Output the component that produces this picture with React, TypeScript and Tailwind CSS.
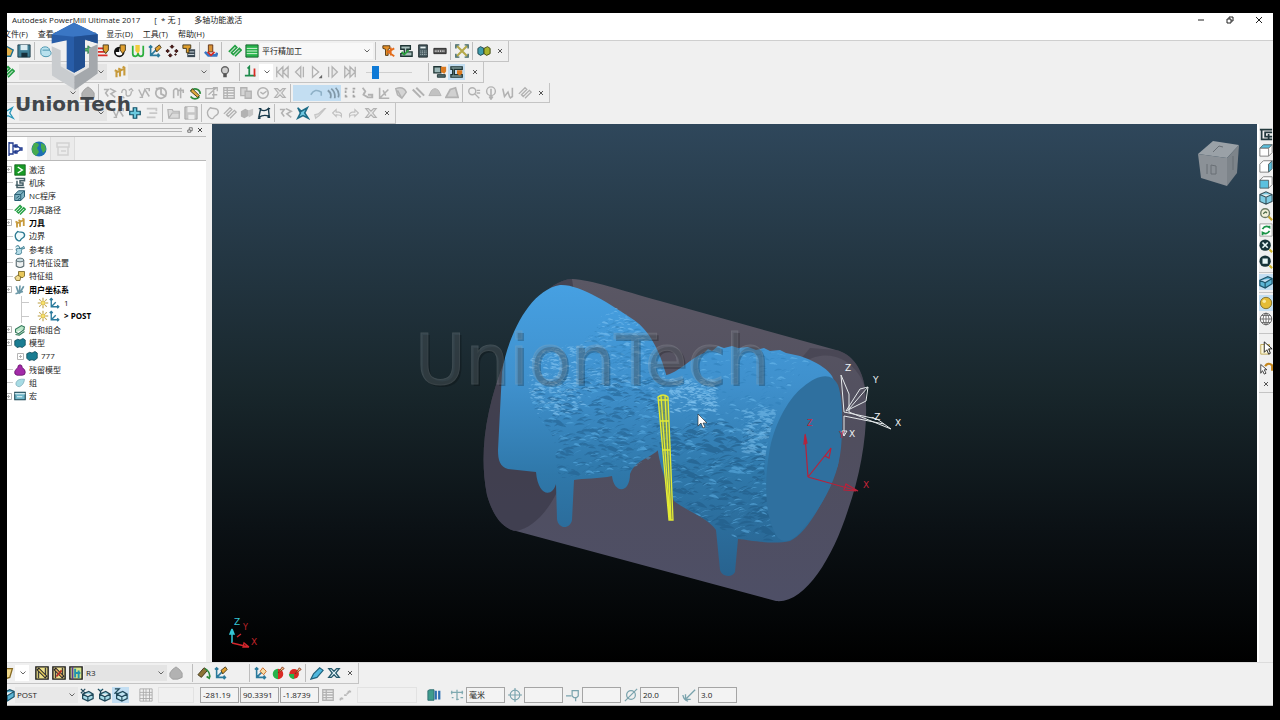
import type { ReactNode } from "react";

const G = "#b2b2b2";

const tool = <path d="M7 1h6v6l-3 4-3-4z" fill="#e0a030" stroke="#3b3115" />;
const axes = <path d="M3 2v11h10M3 13l6-6M1 4l2-2 2 2M11 11l2 2-2 2" fill="none" stroke="#2a7a9c" strokeWidth="1.8" />;

const icons: { [key: string]: ReactNode } = {
    open: <path d="M1 6l6-3 7 4-3 7H1z" fill="#e3b04b" stroke="#1d6f92" strokeWidth="1.5" />,
    save: <><path d="M1 1h14v14H1z" fill="#3f7f96" stroke="#1c3a48" /><path d="M4 1h8v6H4z" fill="#dcecf2" /><path d="M5 10h7v5H5z" fill="#17303c" /></>,
    block: <><path d="M2 7c0-5 10-5 10 0l2 3c0 6-12 6-12 0z" fill="#b8e1ee" stroke="#3f8ba7" /><path d="M4 7h8" stroke="#3f8ba7" /></>,
    rapid: <path d="M1 5h8V2l5 4-5 5V8H1z" fill="#52b36a" stroke="#2f7350" />,
    feeds: <><path d="M1 5h9M1 9h9M1 13h11" stroke="#d92c25" strokeWidth="2" />{tool}</>,
    leads: <><circle cx="6" cy="9" r="5" fill="#fff" stroke="#111" strokeWidth="2" /><path d="M6 9V4a5 5 0 0 0-5 5z" fill="#111" />{tool}</>,
    holder: <><path d="M2 2v9q0 3 3 3t3-4q0 4 3 4t3-3V2" fill="none" stroke="#2cae3e" strokeWidth="2" /><path d="M5 1h5v7l-2 3-3-3z" fill="#f0cc3c" /></>,
    startpt: <>{axes}<path d="M8 5l5-4 2 3-5 5z" fill="#e0a030" stroke="#3b3115" /></>,
    points: <path d="M8 1l2 2-2 2-2-2zM3 6l2 2-2 2-2-2zM13 6l2 2-2 2-2-2zM6 11l2 2-2 2-2-2zM12 11l1 1-1 1-1-1z" fill="#521b18" stroke="#2a0d0b" />,
    sheet: <><path d="M6 6h9v9H6z" fill="#3c4a55" /><path d="M7 9h7M7 12h7" stroke="#dbe6ea" /><path d="M1 1h9v4H8v5H5V5H1z" fill="#e0a030" stroke="#3b3115" /></>,
    collision: <><path d="M1 9l4 4h9l1-3" fill="none" stroke="#3877c4" strokeWidth="3" /><path d="M5 1h5v8H5z" fill="#d89236" stroke="#5a2c10" /><path d="M4 9l4 4 4-4" stroke="#d92c25" strokeWidth="2" fill="none" /></>,
    path: <path d="M1 9l7-7 2 2-6 6 2 2 7-7 2 2-7 7" fill="none" stroke="#24a044" strokeWidth="2" />,
    raster: <><path d="M1 1h14v14H1z" fill="#27b34b" stroke="#155c2a" /><path d="M2 5h12M2 8h12M2 11h12" stroke="#eafbe9" /></>,
    verify: <><path d="M1 2h8v3L7 6v7H4V6L1 5z" fill="#e38f28" stroke="#49300d" /><path d="M14 5L7 9l7 5M10 4v9" stroke="#e36b1a" strokeWidth="2" fill="none" /></>,
    machine: <><path d="M2 2h11v4H9v3h6v5H2v-3h4V6H2z" fill="#a9c1bd" stroke="#1e3434" strokeWidth="1.5" /><path d="M3 9l3 3 5-5" stroke="#28a13b" strokeWidth="2" fill="none" /></>,
    calc: <><path d="M3 1h10v14H3z" fill="#46595f" stroke="#1c2529" /><path d="M5 3h6v2H5z" fill="#e7f1f1" /><path d="M5 8h7M5 10h7M5 12h7" stroke="#c1cfd0" strokeDasharray="1 1" /></>,
    ruler: <><path d="M1 5h14v6H1z" fill="#555" stroke="#222" /><path d="M2 8h12" stroke="#ddd" strokeWidth="2" strokeDasharray="1 1" /></>,
    fit: <><path d="M2 2l12 12M14 2L2 14" stroke="#b5a94a" strokeWidth="2.4" /><path d="M1 5V1h4M11 1h4v4M15 11v4h-4M5 15H1v-4" fill="none" stroke="#3c6464" strokeWidth="1.6" /></>,
    cubes: <><path d="M1 5l3-2 4 2v6l-4 2-3-2z" fill="#3e9cad" stroke="#163c45" /><path d="M8 5l4-2 3 2v6l-4 2-3-2z" fill="#a8b32d" stroke="#37400c" /></>,
    tools: <path d="M2 6l2 1v7M6 4l2 1v8M11 2l2 1v9M3 9l10-5" fill="none" stroke="#c79a3b" strokeWidth="2.4" />,
    bulb: <><circle cx="8" cy="6" r="4" fill="#cfcfcf" stroke="#666" strokeWidth="1.5" /><path d="M6 10h4v4H6z" fill="#555" /></>,
    simul: <><path d="M4 4l2-2v9M1 12h12" stroke="#1e8b4c" strokeWidth="2" fill="none" /><path d="M11 4h2v9h-2z" fill="#d92c25" /></>,
    first: <path d="M2 2v12M9 2v12L3 8zM15 2v12L9 8z" fill="#e9e9e9" stroke={G} strokeWidth="1.5" />,
    back: <path d="M13 2v12M10 2v12L4 8z" fill="#e9e9e9" stroke={G} strokeWidth="1.5" />,
    play: <><path d="M4 2l7 6-7 6z" fill="#f4f4f4" stroke={G} strokeWidth="1.5" /><path d="M15 11v4h-4z" fill="#666" /></>,
    step: <path d="M3 2v12M7 2v12l6-6z" fill="#e9e9e9" stroke={G} strokeWidth="1.5" />,
    last: <path d="M2 2v12l6-6zM8 2v12l6-6zM14 2v12" fill="#e9e9e9" stroke={G} strokeWidth="1.5" />,
    simA: <><path d="M1 2h8v7H1z" fill="#9cb7b7" stroke="#1e3434" strokeWidth="1.5" /><path d="M5 11h9v3H5z" fill="#526a6e" stroke="#1e3434" /><path d="M9 2h6v5l-2 3-4-2z" fill="#dc7a20" /></>,
    simB: <><path d="M1 2h13v3H5v6h9v3H1v-3h2V5H1z" fill="#7b9696" stroke="#1e3434" strokeWidth="1.4" /><path d="M8 6h6v4l-3 2-3-2z" fill="#dc7a20" /></>,
    gcube: <path d="M4 4l4-3 4 3 3 4v5l-5 2H4l-3-3V8z" fill={G} stroke="#9c9c9c" />,
    g1: <path d="M1 4h5l-3 4 3 4M8 3l6 3-5 3 5 4" fill="none" stroke={G} strokeWidth="1.8" />,
    g2: <path d="M2 8c0-6 6-5 5 0s6 5 6-2M10 5l3-2 2 3M3 12l2 2" fill="none" stroke={G} strokeWidth="1.6" />,
    g3: <path d="M2 4l4 8 3-8 5 8M3 13h4M10 3h4v3" fill="none" stroke={G} strokeWidth="1.7" />,
    g4: <><circle cx="8" cy="8" r="6" fill="none" stroke={G} strokeWidth="2" /><path d="M2 3h6v6l6 3" fill="none" stroke={G} strokeWidth="2" /></>,
    g5: <path d="M3 14V5q3-4 5 0v6M11 2v12M8 5h6v3" fill="none" stroke={G} strokeWidth="1.8" />,
    recycle: <><path d="M3 6a6 6 0 0 1 11 3M13 12a6 6 0 0 1-10 0" fill="none" stroke="#2a8a3c" strokeWidth="2" /><path d="M5 3l8 8-2 2-8-7z" fill="#dfa93a" stroke="#3b3115" /></>,
    g6: <path d="M1 3h9v11H1zM4 10l9-8M9 2h5v4M8 10h6" fill="none" stroke={G} strokeWidth="1.5" />,
    list: <path d="M2 2h12v12H2zM2 5h12M2 8h12M2 11h12M6 2v12" fill="none" stroke={G} strokeWidth="1.5" />,
    copy: <><path d="M2 2h7v9H2z" fill="#d4d4d4" stroke={G} strokeWidth="1.5" /><path d="M7 6h7v8H7z" fill="#c9c9c9" stroke={G} strokeWidth="1.5" /></>,
    clock: <><circle cx="8" cy="8" r="6" fill="none" stroke={G} strokeWidth="1.8" /><path d="M5 7l3 2 4-3" fill="none" stroke={G} strokeWidth="1.5" /></>,
    del: <path d="M2 3l4 5-4 5h3l3-3 3 3h3l-4-5 4-5h-3L8 6 5 3z" fill="#e6e6e6" stroke={G} strokeWidth="1.3" />,
    arc: <path d="M2 10q5-8 12-3v4" fill="none" stroke="#8eb0c6" strokeWidth="1.8" />,
    waves: <path d="M2 5q5 3 3 9M6 3q5 4 4 11M11 2q5 5 3 11" fill="none" stroke="#8098a8" strokeWidth="2" />,
    dots: <path d="M2 3h3M11 3h3M2 12h3M11 12h3M3 5v6M12 5v6" stroke="#a5a5a5" strokeWidth="2" strokeDasharray="3 2" />,
    curve: <path d="M3 2l3 4-2 4 5 3h5v-3H9" fill="none" stroke={G} strokeWidth="2.2" />,
    gaxes: <path d="M3 2v12h11M3 14L13 4M7 5l3 6" fill="none" stroke={G} strokeWidth="1.8" />,
    fan: <path d="M2 3q9-3 12 4l-5 7-5-4zM4 5l5 9" fill="#d4d4d4" stroke={G} strokeWidth="1.6" />,
    lines: <path d="M2 4l9 9M6 2l9 9" stroke={G} strokeWidth="2.4" />,
    dome: <path d="M1 11l3-6q4-4 8 0l3 6z" fill="#c2c2c2" stroke={G} />,
    trap: <path d="M1 13l5-9 6-2 3 11z" fill="#d0d0d0" stroke={G} strokeWidth="2" />,
    search: <><circle cx="6" cy="6" r="4" fill="none" stroke={G} strokeWidth="1.6" /><path d="M9 9l5 5M11 5h4M11 8h4" stroke={G} strokeWidth="1.6" /></>,
    pin: <><circle cx="8" cy="6" r="5" fill="none" stroke={G} strokeWidth="1.6" /><path d="M8 3v12M6 12l2 3 2-3" stroke={G} strokeWidth="1.8" fill="none" /></>,
    ends: <path d="M2 3l2 9 4-5 2 6M13 2v10l-3 2" fill="none" stroke={G} strokeWidth="1.8" />,
    hatch: <path d="M1 9l7-7 2 2-6 6 2 2 7-7 2 2-7 7" fill="none" stroke={G} strokeWidth="1.6" />,
    star: <path d="M2 2l4 4 7-4-3 6 4 6-6-3-6 3 3-6z" fill="#dff4fa" stroke="#2795b8" strokeWidth="1.5" />,
    plus: <path d="M6 2h4v4h4v4h-4v4H6v-4H2V6h4z" fill="#6bc9de" stroke="#135268" strokeWidth="1.4" />,
    glist: <path d="M2 3h10M5 8h9M2 13h10M13 2v4" stroke="#c8c8c8" strokeWidth="2" />,
    gopen: <path d="M1 4h5l1 2h7v8H2zM2 14l4-6h9" fill="#dadada" stroke={G} strokeWidth="1.4" />,
    gsave: <><path d="M1 1h14v14H1z" fill="#c6c6c6" stroke="#a2a2a2" /><path d="M4 1h8v6H4zM5 10h7v5H5z" fill="#ececec" /></>,
    bound: <path d="M5 2c4 2 8-1 9 4s-4 4-5 7-6 1-7-3 0-5 3-8z" fill="none" stroke={G} strokeWidth="1.6" />,
    gblock: <><path d="M1 6l5-3 4 2v6l-5 3-4-2z" fill={G} /><path d="M9 5l6-2v7l-5 3z" fill="#c6c6c6" /></>,
    frame: <path d="M2 13L4 4q5 3 9-1l1 9Q8 9 2 13M1 14h3M12 13h3M2 3h3M12 3h3" fill="none" stroke="#17394a" strokeWidth="1.6" />,
    cstar: <path d="M2 2l4 4 7-4-3 6 4 6-6-3-6 3 3-6z" fill="#71c9e3" stroke="#1c6b86" strokeWidth="1.8" />,
    brush: <path d="M14 3L7 11l-4 3-1-4 4-1 7-6z" fill="#ddd" stroke="#c4c4c4" strokeWidth="1.3" />,
    undo: <path d="M3 8l4-4v3h3q4 1 3 5-1-2-6-2v2z" fill="none" stroke="#c0c0c0" strokeWidth="1.3" />,
    redo: <path d="M13 8L9 4v3H6q-4 1-3 5 1-2 6-2v2z" fill="none" stroke="#c0c0c0" strokeWidth="1.3" />,
    tree: <path d="M2 1v14M2 2h4v11H2M6 5h3M6 11h3M8 4h2v2H8zM13 7h2v2h-2zM8 10h2v2H8zM10 5l3 2M10 11l3-2" fill="none" stroke="#203a8f" strokeWidth="1.3" />,
    globe: <><circle cx="8" cy="8" r="7.5" fill="#1c6fb4" /><path d="M3 2q4-1 5 2L6 7l2 4-3 4q-5-3-4-8zM10 2l4 2 1 5-3 3-2-5z" fill="#46ab4e" /></>,
    recycler: <path d="M2 2h12v4H2zM3 6v8h10V6M6 10h5" fill="none" stroke="#d2d2d2" strokeWidth="1.5" />,
    active: <><path d="M1 1h14v14H1z" fill="#189a26" stroke="#0b5d15" /><path d="M5 4l6 4-6 4" fill="none" stroke="#fff" strokeWidth="2" /></>,
    mach: <path d="M2 2h12v3H8v3h4v3H2M4 5v9h10" fill="none" stroke="#456068" strokeWidth="2" />,
    nc: <path d="M1 6l5-5h8v8l-5 5H1zM1 6h8v8M9 6l5-5M3 11l4-3M5 13l3-2" fill="#7db1c0" stroke="#265c70" strokeWidth="1.3" />,
    bnd: <path d="M5 2c4 2 8-1 9 4s-4 4-5 7-6 1-7-3 0-5 3-8z" fill="#f0fbfd" stroke="#2c7a92" strokeWidth="1.8" />,
    pattern: <path d="M2 4q4-4 5 0t6-1l1 3q-5 0-4 4t-5 4l-3-1q3-3 1-5t3-2 5 0" fill="#b5dde8" stroke="#447f93" strokeWidth="1.3" />,
    hole: <><path d="M3 4v8q5 4 10 0V4" fill="#eef1f1" stroke="#5c6e74" strokeWidth="1.5" /><ellipse cx="8" cy="4" rx="5" ry="2.5" fill="#c7dbe0" stroke="#5c6e74" strokeWidth="1.3" /></>,
    feature: <><path d="M6 2h8v6l-2 2H6z" fill="#e9c85b" stroke="#6a5717" /><path d="M1 10l4-3 4 2-1 5H3z" fill="#f2dc92" stroke="#6a5717" /></>,
    wps: <path d="M3 3l3 9M8 2l-1 10M13 3L7 13M2 13l10-3" fill="none" stroke="#6a97a6" strokeWidth="2.2" />,
    sun: <><circle cx="8" cy="8" r="3" fill="#f8e26c" stroke="#c3a238" /><path d="M8 1v3M8 12v3M1 8h3M12 8h3M3 3l2 2M11 11l2 2M13 3l-2 2M3 13l2-2" stroke="#b99c3f" strokeWidth="1.4" /></>,
    axes,
    levels: <path d="M2 7l8-5 4 2-1 4-7 5-4-2zM2 11l4 2 8-6M2 14l5 1 7-5" fill="#b9e6c8" stroke="#35795c" strokeWidth="1.4" />,
    model: <path d="M1 5l4-2 3 1 4-2 3 2v7l-4 3-3-1-4 1-3-3z" fill="#1a7d92" stroke="#0c4653" />,
    stock: <path d="M5 5q0-4 3-4t3 4q4 2 4 6t-4 4H4q-4-1-3-5 1-3 4-5z" fill="#a32aa8" stroke="#5e1264" />,
    group: <path d="M3 7q2-5 11-4-1 8-7 10-6-1-4-6z" fill="#a7dbe4" stroke="#7cabb8" />,
    macro: <><path d="M1 3h14v10H1z" fill="#70b6c9" stroke="#17414f" strokeWidth="1.4" /><path d="M1 5h14M4 9h7" stroke="#ecf8fa" strokeWidth="1.6" /></>,
    vmach: <path d="M1 3h14M3 3v11h12M6 6h9M7 6v5h8M11 8v6" stroke="#23393d" strokeWidth="2" fill="none" />,
    vtop: <><path d="M1 6l4-4h10l-4 4z" fill="#5bc1df" stroke="#4c5a5e" /><path d="M1 6h10v9H1zM11 6l4-4v9l-4 4" fill="#fff" stroke="#777" /></>,
    vside: <><path d="M1 6l4-4h10l-4 4v9H1z" fill="#fff" stroke="#777" /><path d="M11 6l4-4v9l-4 4z" fill="#5bc1df" stroke="#4c5a5e" /></>,
    vfront: <><path d="M1 6l4-4h10v9l-4 4z" fill="#fff" stroke="#777" /><path d="M1 6h10v9H1z" fill="#5bc1df" stroke="#4c5a5e" /></>,
    viso: <path d="M1 4l7-3 7 3v8l-7 3-7-3zM1 4l7 3 7-3M8 7v8" fill="#7fcbe2" stroke="#35505a" strokeWidth="1.2" />,
    zoom: <><circle cx="7" cy="7" r="5" fill="#f3f1da" stroke="#6c7a63" strokeWidth="1.6" /><path d="M5 8q2-4 4-1" stroke="#4e6a49" fill="none" strokeWidth="1.5" /><path d="M11 11l4 4" stroke="#c8a52b" strokeWidth="2.5" /></>,
    refresh: <><path d="M1 1h14v14H1z" fill="#fff" stroke="#999" /><path d="M4 7q3-5 8-2V3M12 9q-3 5-8 2v3" fill="none" stroke="#1b9448" strokeWidth="2" /></>,
    zfit: <><circle cx="7" cy="7" r="6.5" fill="#173338" /><path d="M4 4l6 6M10 4l-6 6" stroke="#e8f6f6" strokeWidth="2" /><path d="M12 12l3 3" stroke="#d0b62b" strokeWidth="2.5" /></>,
    zbox: <><circle cx="7" cy="7" r="6.5" fill="#173338" /><path d="M4 4h6v6H4z" fill="#e8f6f6" /><path d="M12 12l3 3" stroke="#d0b62b" strokeWidth="2.5" /></>,
    vblock: <path d="M1 6l9-4 5 2v6l-8 5-6-3zM1 6l6 3 8-5M7 9v6" fill="#5cb5d6" stroke="#1c556c" strokeWidth="1.4" />,
    ball: <><circle cx="8" cy="8" r="6.5" fill="#e5bc35" stroke="#7d6a27" /><circle cx="6" cy="6" r="2" fill="#fae99c" /></>,
    wire: <><circle cx="8" cy="8" r="6.5" fill="#fff" stroke="#555" /><path d="M1 8h14M8 1v14M8 1q-7 7 0 14M8 1q7 7 0 14M3 4h10M3 12h10" fill="none" stroke="#666" /></>,
    select: <><path d="M2 4h10v11H2z" fill="#fdf8dc" stroke="#b9a04b" /><path d="M6 1v12l3-3 2 5 2-1-2-5h4z" fill="#fff" stroke="#111" /></>,
    deselect: <><path d="M2 4v10l2-3 2 4 2-1-2-4h3z" fill="#fff" stroke="#333" /><path d="M7 6q3-5 8-1v6" fill="none" stroke="#c5861c" strokeWidth="2.4" /></>,
    cup: <path d="M0 3h13l-3 10-6 2-4-1z" fill="#f1d98c" stroke="#876a23" strokeWidth="1.5" />,
    limA: <><path d="M1 1h14v14H1z" fill="#efe28a" stroke="#1d1d1d" strokeWidth="1.6" /><path d="M4 2v12M12 2v12" stroke="#3f3f3a" strokeWidth="1.6" /><path d="M3 3l10 10" stroke="#28272f" strokeWidth="4" /><path d="M4 4l8 8" stroke="#e8cf5a" strokeWidth="1.6" /></>,
    limB: <><path d="M1 1h14v14H1z" fill="#efdf8f" stroke="#1d1d1d" strokeWidth="1.6" /><path d="M4 2v12M12 2v12" stroke="#3f3f3a" strokeWidth="1.6" /><path d="M3 3l10 10" stroke="#28272f" strokeWidth="4" /><path d="M4 4l8 8" stroke="#e8b05a" strokeWidth="1.6" /><path d="M11 5l-6 7" stroke="#b93228" strokeWidth="2" /></>,
    limC: <><path d="M1 1h14v14H1z" fill="#d7e48a" stroke="#1d1d1d" strokeWidth="1.6" /><path d="M4 1v14" stroke="#5a3a92" strokeWidth="2" /><path d="M7 3v10M11 5v9M7 8h6" stroke="#2392ad" strokeWidth="2.2" /></>,
    pickA: <><path d="M1 10l7-8 4 3-7 8z" fill="#8d7436" stroke="#3b3115" /><path d="M9 3q7 4 5 11M11 12l3 2 1-3" stroke="#2a8a3c" strokeWidth="1.8" fill="none" /></>,
    chkA: <>{axes}<path d="M7 6l3-4 4 4-3 4z" fill="#f5dfa8" stroke="#c9601e" /></>,
    chkB: <><path d="M8 3a6 6 0 0 0 0 12z" fill="#27b34b" /><path d="M8 3a6 6 0 0 1 0 12z" fill="#d92c25" /><path d="M8 8l5-7 2 2z" fill="#e9c68b" stroke="#8a2c10" /></>,
    chkC: <><circle cx="7" cy="9" r="5.5" fill="#d92c25" /><path d="M1 9a6 6 0 0 0 6 6V9z" fill="#27b34b" /><path d="M8 9l5-7 2 2z" fill="#e9c68b" stroke="#8a2c10" /></>,
    marker: <path d="M1 15l3-6 7-7 4 3-7 8z" fill="#4fb8de" stroke="#21637d" strokeWidth="1.3" />,
    cdel: <path d="M2 3l4 5-4 5h3l3-3 3 3h3l-4-5 4-5h-3L8 6 5 3z" fill="#e7f7fb" stroke="#25586b" strokeWidth="1.5" />,
    planeX: <path d="M3 7l7-3 5 3v5l-6 3-6-3zM3 7l6 3 6-3M9 10v5M1 1l5 5M6 1L1 6" fill="#a8dbe8" stroke="#20485a" strokeWidth="1.4" />,
    planeY: <path d="M3 7l7-3 5 3v5l-6 3-6-3zM3 7l6 3 6-3M9 10v5M1 1l3 3 3-3M4 4v4" fill="#a8dbe8" stroke="#20485a" strokeWidth="1.4" />,
    planeZ: <path d="M3 7l7-3 5 3v5l-6 3-6-3zM3 7l6 3 6-3M9 10v5M1 1h5L1 6h5" fill="#bde6f2" stroke="#20485a" strokeWidth="1.4" />,
    grid: <path d="M1 1h14v14H1zM1 5h14M1 8h14M1 12h14M5 1v14M8 1v14M12 1v14" fill="none" stroke="#a9a9a9" />,
    scatter: <path d="M2 12h4M7 8h3M11 4h4M2 14l3-3M10 7l4-4" stroke="#b9b9b9" strokeWidth="2" />,
    units: <><path d="M1 3l2-1h5v12H1z" fill="#3f9c8d" stroke="#2b6a70" /><path d="M10 3v10M14 3v10" stroke="#2d6fb1" strokeWidth="2.6" /></>,
    tol: <path d="M1 5h14M2 3v4M8 2v12M14 3v4M2 11h2M7 13h3M12 11h3" stroke="#7fa9b0" strokeWidth="1.4" fill="none" />,
    target: <><circle cx="8" cy="8" r="5.5" fill="none" stroke="#7aa3ad" strokeWidth="1.3" /><path d="M0 8h16M8 0v16" stroke="#7aa3ad" strokeWidth="1.3" /></>,
    tip: <path d="M0 9h6M7 3h7v6l-2 2H9L7 9zM11 11v4" fill="none" stroke="#7aa3ad" strokeWidth="1.4" />,
    dia: <><circle cx="8" cy="8" r="5" fill="none" stroke="#7aa3ad" strokeWidth="1.4" /><path d="M1 15L15 1" stroke="#7aa3ad" strokeWidth="1.4" /></>,
    rad: <path d="M15 2L5 12M4 7v6h6M1 8q1 6 6 7" fill="none" stroke="#7aa3ad" strokeWidth="1.5" />,
};

function Icon({ name, className = "h-3.5 w-3.5" }: { name: string, className?: string }) {
    return <svg viewBox="0 0 16 16" className={`${className} shrink-0`} aria-hidden="true">{icons[name]}</svg>
}

function Tools({ names, on = [] }: { names: string[], on?: string[] }) {
    return <>
        {names.map((name) => (
            <button key={name} aria-label={name}
                className={`flex h-4 w-[17px] shrink-0 items-center justify-center ${on.includes(name) ? "bg-[#c3def2]" : ""}`}>
                <Icon name={name} />
            </button>
        ))}
    </>
}

// left-most button of a bar, half of it runs under the window edge
function CutTool({ name }: { name: string }) {
    return <button aria-label={name} className="flex h-4 w-2 shrink-0 items-center justify-end overflow-hidden">
        <Icon name={name} />
    </button>
}

function Sep() {
    return <div className="mx-0.5 h-[18px] w-px shrink-0 bg-[#bdbdbd]" />
}

function Close({ label }: { label: string }) {
    return <button aria-label={label} className="flex h-4 w-4 shrink-0 items-center justify-center">
        <svg viewBox="0 0 6 6" className="h-1.5 w-1.5"><path d="M1 1l4 4M5 1L1 5" stroke="#555" /></svg>
    </button>
}

function Combo({ label, text = "", className }: { label: string, text?: string, className: string }) {
    return <div className={`grid h-4 shrink-0 items-center ${className}`}>
        <select aria-label={label} className="col-start-1 row-start-1 h-4 w-full appearance-none truncate bg-transparent pl-0.5">
            <option>{text}</option>
        </select>
        <svg viewBox="0 0 6 4" className="pointer-events-none col-start-1 row-start-1 mr-[3px] h-1 w-1.5 justify-self-end">
            <path d="M.5 .5L3 3 5.5 .5" fill="none" stroke="#666" />
        </svg>
    </div>
}

function Field({ label, value = "" }: { label: string, value?: string }) {
    return <input aria-label={label} defaultValue={value}
        className="h-4 w-[39px] shrink-0 border border-[#a5a5a5] bg-[#f3f3f3] pl-0.5" />
}

function Bar({ children }: { children: ReactNode }) {
    return <div className="flex h-full items-center border-r border-b border-[#c4c4c4]">{children}</div>
}

interface Node {
    icon: string[]
    text: string
    bold?: boolean
    level?: number
    expand?: boolean
}

const nodes: Node[] = [
    { icon: ["active"], text: "激活", expand: true },
    { icon: ["mach"], text: "机床" },
    { icon: ["nc"], text: "NC程序" },
    { icon: ["path"], text: "刀具路径" },
    { icon: ["tools"], text: "刀具", bold: true, expand: true },
    { icon: ["bnd"], text: "边界" },
    { icon: ["pattern"], text: "参考线" },
    { icon: ["hole"], text: "孔特征设置" },
    { icon: ["feature"], text: "特征组" },
    { icon: ["wps"], text: "用户坐标系", bold: true, expand: true },
    { icon: ["sun", "axes"], text: "1", level: 1 },
    { icon: ["sun", "axes"], text: "> POST", bold: true, level: 1 },
    { icon: ["levels"], text: "层和组合", expand: true },
    { icon: ["model"], text: "模型", expand: true },
    { icon: ["model"], text: "777", level: 1, expand: true },
    { icon: ["stock"], text: "残留模型" },
    { icon: ["group"], text: "组" },
    { icon: ["macro"], text: "宏", expand: true },
]

function Tree() {
    return <ul className="flex h-60 flex-col">
        {nodes.map((node, index) => (
            <li key={index} className={`flex flex-1 items-center ${node.level ? "pl-2.5" : ""}`}>
                {node.expand
                    ? <svg viewBox="0 0 7 7" className={`mr-0.5 h-[7px] w-[7px] shrink-0 ${node.level ? "" : "-ml-0.5"}`}>
                        <path d="M.5 .5h6v6h-6zM2 3.5h3M3.5 2v3" fill="#fff" stroke="#b4b4b4" />
                    </svg>
                    : <span className={`shrink-0 border-[#c9c9c9] ${node.level ? "mr-1 ml-1 h-full w-2 border-l bg-[linear-gradient(#c9c9c9,#c9c9c9)] bg-[length:100%_1px] bg-center bg-no-repeat" : "mr-px w-1.5 border-t"}`} />}
                {node.icon.length > 1 && <span className="w-1" />}
                {node.icon.map((name) => <Icon key={name} name={name} className="h-3 w-3" />)}
                <span className={`pl-[3px] leading-3 whitespace-pre ${node.bold ? "font-bold text-black" : ""}`}>{node.text}</span>
            </li>
        ))}
    </ul>
}

// seeded so that the surface facets stay the same on every draw
function facets(count: number, x0: number, y0: number, w: number, h: number, size: number, seed: number) {
    let s = seed;
    const rnd = () => (s = (s * 16807) % 2147483647) / 2147483647;
    let d = "";
    for (let i = 0; i < count; i++) {
        const x = x0 + rnd() * w;
        const y = y0 + rnd() * h;
        const l = size * (0.5 + rnd());
        const dy = l * (rnd() * 0.9 - 0.6);
        d += `M${x.toFixed(1)} ${y.toFixed(1)}q${(l * 0.4).toFixed(1)} ${(-l * 0.45).toFixed(1)} ${l.toFixed(1)} ${dy.toFixed(1)}q${(-l * 0.4).toFixed(1)} ${(-l * 0.05).toFixed(1)} ${(-l).toFixed(1)} ${(-dy).toFixed(1)}z`;
    }
    return d;
}

const stockShape = "M572 279C592 280 620 290 660 301L836 350C852 354 862 368 865 388C869 425 862 470 848 510C832 560 804 604 776 601L516 531C500 528 492 512 487 495C479 455 485 410 505 360C520 320 545 280 572 279Z";
const leftPart = "M560 285C580 284 610 304 634 320C650 331 660 352 666 374C674 400 672 440 656 452C645 460 634 462 630 474C630 494 614 494 612 476C600 479 582 478 574 480L572 520C570 530 558 529 557 519L556 484C552 498 538 496 536 472L508 469C500 467 498 460 498 450L502 372C508 335 530 290 560 285Z";
const rightPart = "M664 376C680 372 690 358 704 353L708 349L712 351L718 346L724 348L732 346L738 348L748 347L756 350L764 348L770 351L780 350L786 353L800 356L808 359C820 364 828 370 832 376C844 398 842 440 838 465C826 500 806 534 790 541C772 545 750 540 738 539L735 572C732 578 722 577 720 570L716 530C708 518 685 510 674 501C664 480 654 450 656 420Z";
const face = "M838 385C832 372 818 374 803 387C790 397 776 420 770 448C764 480 764 518 778 538C786 544 794 540 802 530C824 504 838 478 841 448C843 424 843 400 838 385Z";

function Viewport() {
    return <svg viewBox="212 124 1045 538" className="h-full w-full" role="img" aria-label="model view">
        <defs>
            <linearGradient id="stock" x1="0" y1="0" x2="0" y2="1">
                <stop offset="0" stopColor="#5a5764" />
                <stop offset=".5" stopColor="#504e5e" />
                <stop offset="1" stopColor="#4e4f66" />
            </linearGradient>
            <linearGradient id="body" x1="0" y1="285" x2="0" y2="575" gradientUnits="userSpaceOnUse">
                <stop offset="0" stopColor="#46a0e2" />
                <stop offset=".35" stopColor="#3f90cc" />
                <stop offset=".65" stopColor="#2f78aa" />
                <stop offset="1" stopColor="#28638f" />
            </linearGradient>
            <clipPath id="texL"><path d="M612 305C650 325 666 360 668 400L656 455L630 470L560 478C552 455 560 440 545 425C530 410 524 380 530 360C548 340 575 350 590 335C605 325 595 312 612 305Z" /></clipPath>
            <clipPath id="texR"><path d="M664 376L704 353L760 349L812 362C786 385 768 420 764 470L776 541L738 539L716 526L674 501L656 430Z" /></clipPath>
        </defs>

        <path d={stockShape} fill="url(#stock)" />
        <path d="M572 279C545 280 520 320 505 360C485 410 479 455 487 495C492 512 500 528 516 531C535 528 555 505 566 470L590 400Z" fill="#373544" opacity=".6" />
        <path d="M836 350C852 354 862 368 865 388C862 375 846 352 820 356C806 358 796 368 790 372L810 348Z" fill="#3d3c49" opacity=".5" />
        <path d={leftPart} fill="url(#body)" />
        <path d={rightPart} fill="url(#body)" />
        <g clipPath="url(#texL)">
            <path d={facets(420, 530, 380, 140, 100, 9, 91)} fill="#225f8c" opacity=".55" />
            <path d={facets(260, 530, 380, 140, 100, 7, 17)} fill="#5aaee4" opacity=".6" />
            <path d={facets(420, 525, 345, 55, 70, 5, 53)} fill="#8acaf5" opacity=".6" />
            <path d={facets(360, 580, 305, 88, 85, 6, 29)} fill="#82c5f4" opacity=".55" />
            <path d={facets(260, 580, 320, 88, 75, 6, 77)} fill="#2b76ab" opacity=".45" />
        </g>
        <g clipPath="url(#texR)">
            <path d={facets(480, 650, 425, 135, 125, 11, 37)} fill="#215c87" opacity=".6" />
            <path d={facets(260, 650, 425, 135, 120, 8, 71)} fill="#58a8db" opacity=".65" />
            <path d={facets(200, 680, 345, 130, 80, 6, 61)} fill="#2d7db7" opacity=".5" />
            <path d={facets(150, 690, 345, 120, 90, 6, 13)} fill="#6dbbee" opacity=".55" />
            <path d={facets(300, 668, 380, 45, 32, 5, 43)} fill="#93d0f8" opacity=".6" />
            <path d={facets(200, 740, 410, 35, 45, 7, 83)} fill="#7cc1ef" opacity=".55" />
        </g>
        <path d={face} fill="#2f709f" />

        <g fontFamily="DejaVu Sans" fontSize="69">
            <text x="417" y="386" fill="#000" opacity=".22">UnionTech</text>
            <text x="415" y="384" fill="#7f8a92" stroke="#a8aeb2" opacity=".25">UnionTech</text>
        </g>

        <path d="M658 397q5-4 10 0l5 123h-4zM658 400h10M661 396l9 124M665 396l6 124M660 421h9M662 450h8" fill="#8f9d3e" fillOpacity=".6" stroke="#e3ea35" strokeWidth="1.3" />

        <path d="M844 412L841 375l8 19v18l42 17-14-10-33-7M849 409l19-22-8 2-14 22 20-10 2-14M844 416l40 8M844 416v20l-2-5h5l-3 5" fill="none" stroke="#e4e8ea" />
        <g fill="#eef2f4" fontFamily="DejaVu Sans" fontSize="9">
            <text x="845" y="371">Z</text>
            <text x="873" y="383">Y</text>
            <text x="895" y="426">X</text>
            <text x="849" y="437">X</text>
            <text x="871" y="420">-Z</text>
        </g>
        <path d="M808 477l-3-42-1 9 3-1-2-9M808 477l23-29-6 8 4 2 2-10M808 477l50 14-12-7-2 6 12 1" fill="none" stroke="#b8223a" strokeWidth="1.2" />
        <g fill="#c7243a" fontFamily="DejaVu Sans" fontSize="9">
            <text x="807" y="426" fontSize="8">Z</text>
            <text x="839" y="438" fontSize="8">Y</text>
            <text x="863" y="488">X</text>
        </g>

        <path d="M232 643v-14l-2 5h4l-2-5" stroke="#35c6d6" strokeWidth="1.5" fill="none" />
        <path d="M232 643l17 4-5-4-1 4 6 0M237 637l4-3" stroke="#d2262c" strokeWidth="1.3" fill="none" />
        <g fontFamily="DejaVu Sans" fontSize="8">
            <text x="234" y="625" fill="#35c6d6" fontSize="9">Z</text>
            <text x="243" y="630" fill="#c2242a">Y</text>
            <text x="251" y="645" fill="#c2242a" fontSize="9">X</text>
        </g>

        <path d="M1213 141l26 4-12 13-29-4z" fill="#9aa1a7" />
        <path d="M1198 154l29 4v28l-26-8z" fill="#8b9197" />
        <path d="M1239 145l-2 28-10 13v-28z" fill="#7d848a" />
        <path d="M1213 152l6-6 4 1M1207 164v10M1211 165v9h5v-8zM1233 156v14" fill="none" stroke="#696f75" />

        <path d="M698 414v12l3-3 2 5 2-1-2-4h4z" fill="#fff" stroke="#222" strokeWidth=".6" />
    </svg>
}

function Logo() {
    return <div className="pointer-events-none absolute top-5 left-[15px] flex flex-col">
        <svg viewBox="150 60 150 215" className="ml-[35px] h-[72px] w-[50px]" aria-hidden="true">
            <path d="M155 138l27 12v48l42 26v44l-68-42z" fill="#c9cccf" />
            <path d="M293 132l-26 12v58l-44 26v42l70-50z" fill="#a4a8ac" />
            <path d="M155 103l67-35 71 34v28l-38-12v82l-33 18-22-12v-86l-45 10z" fill="#285da8" />
            <path d="M155 103l67-35 71 34-71 8z" fill="#3a76c4" />
            <path d="M222 110l71-8v28l-38-12v82l-33 18z" fill="#214f91" />
        </svg>
        <span className="-mt-0.5 font-['DejaVu_Sans'] text-[20px] leading-[28px] font-bold text-[#41464b]">UnionTech</span>
    </div>
}

const menus = ["文件(F)", "查看(V)", "插入(I)", "显示(D)", "工具(T)", "帮助(H)"]

export default function App() {
    return <div className="relative flex min-h-screen flex-col overflow-hidden bg-black px-[7px] pt-[13px] pb-[14px] font-['Open_Sans','Noto_Sans_CJK_SC',sans-serif] text-[8px] text-[#222]">
        <div className="flex flex-1 flex-col overflow-hidden bg-[#f0f0f0]">
            <header className="border-b border-[#cfcfcf] bg-white">
                <div className="flex h-3.5 items-center pl-[5px]">
                    <h1 className="flex gap-3.5 leading-3 whitespace-pre">
                        <span>Autodesk PowerMill Ultimate 2017</span>
                        <span>[  * 无 ]</span>
                        <span>多轴功能激活</span>
                    </h1>
                    <div className="ml-auto flex">
                        {[["minimize", "M1 4h6"], ["restore", "M1 3h4v4H1zM3 3V1h4v4H5"], ["close", "M1 1l6 6M7 1L1 7"]].map(([label, d]) => (
                            <button key={label} aria-label={label} className="flex w-[29px] justify-center">
                                <svg viewBox="0 0 8 8" className="h-2 w-2"><path d={d} fill="none" stroke="#222" /></svg>
                            </button>
                        ))}
                    </div>
                </div>
                <nav className="-ml-1 flex h-[13px] gap-2.5 leading-3">
                    {menus.map((menu) => <button key={menu} className="shrink-0">{menu}</button>)}
                </nav>
            </header>

            <div className="flex h-[21px]">
                <Bar>
                    <CutTool name="open" />
                    <Tools names={["save"]} />
                    <Sep />
                    <div className="flex w-[58px] justify-between"><Tools names={["block", "rapid"]} /></div>
                    <Tools names={["feeds", "leads", "holder", "startpt", "points", "sheet"]} />
                    <Sep />
                    <Tools names={["collision"]} />
                    <Sep />
                    <div className="w-0.5" />
                    <Tools names={["path", "raster"]} />
                    <Combo label="strategy" text="平行精加工" className="w-[113px] bg-[#f8f8f8]" />
                    <Sep />
                    <div className="w-0.5" />
                    <Tools names={["verify", "machine", "calc", "ruler"]} />
                    <Sep />
                    <Tools names={["fit"]} />
                    <Sep />
                    <Tools names={["cubes"]} />
                    <Close label="close main bar" />
                </Bar>
            </div>

            <div className="flex h-[21px]">
                <Bar>
                    <CutTool name="path" />
                    <Combo label="toolpath" className="ml-1 w-[88px] bg-[#e4e4e4]" />
                    <div className="w-1" />
                    <Tools names={["tools"]} />
                    <Combo label="tool" className="w-[82px] bg-[#e4e4e4]" />
                    <div className="w-1.5" />
                    <Tools names={["bulb"]} />
                    <div className="w-1" />
                    <Sep />
                    <Tools names={["simul"]} />
                    <Combo label="speed mode" className="w-3.5 bg-white" />
                    <Tools names={["first", "back", "play", "step", "last"]} />
                    <input type="range" aria-label="speed" defaultValue={15}
                        className="ml-2 h-px w-[46px] appearance-none bg-[#cfcfcf] [&::-webkit-slider-thumb]:h-[13px] [&::-webkit-slider-thumb]:w-[7px] [&::-webkit-slider-thumb]:appearance-none [&::-webkit-slider-thumb]:bg-[#0f7ad6]" />
                    <div className="w-3.5" />
                    <Sep />
                    <Tools names={["simA", "simB"]} on={["simB"]} />
                    <div className="w-0.5" />
                    <Close label="close simulation bar" />
                </Bar>
            </div>

            <div className="flex h-5">
                <Bar>
                    <Combo label="active toolpath" className="w-[72px] bg-[#e4e4e4]" />
                    <Tools names={["gcube"]} />
                    <Sep />
                    <Tools names={["g1", "g2", "g3", "g4", "g5", "recycle", "g6", "list", "copy", "clock", "del"]} />
                    <Sep />
                    <div className="flex bg-[#c3def2] pl-3.5"><Tools names={["arc", "waves"]} /></div>
                    <Tools names={["dots", "curve", "gaxes", "fan", "lines", "dome", "trap"]} />
                    <Sep />
                    <Tools names={["search", "pin", "ends", "hatch"]} />
                    <Close label="close toolpath bar" />
                </Bar>
            </div>

            <div className="flex h-[21px]">
                <Bar>
                    <CutTool name="star" />
                    <Combo label="pattern" className="ml-1 w-[88px] bg-[#e4e4e4]" />
                    <div className="w-0.5" />
                    <Tools names={["g3", "plus", "glist"]} />
                    <Sep />
                    <Tools names={["gopen", "gsave"]} />
                    <Sep />
                    <Tools names={["bound", "hatch", "gblock", "frame"]} />
                    <Sep />
                    <Tools names={["g1", "cstar", "brush", "undo", "redo", "del"]} />
                    <Close label="close pattern bar" />
                </Bar>
            </div>

            <main className="flex flex-1">
                <aside className="flex w-[205px] shrink-0 flex-col border-r-[6px] border-r-[#f0f0f0] bg-white">
                    <div className="flex h-3 items-center bg-[#f0f0f0]">
                        <div className="h-1 flex-1 border-y border-[#b5b5b5]" />
                        <button aria-label="float panel" className="ml-1 flex w-2 justify-center">
                            <svg viewBox="0 0 8 8" className="h-1.5 w-1.5"><path d="M1 4h4v3H1zM3 4V1h4v4H5" fill="none" stroke="#555" /></svg>
                        </button>
                        <button aria-label="close panel" className="flex w-3 justify-center">
                            <svg viewBox="0 0 6 6" className="h-1.5 w-1.5"><path d="M1 1l4 4M5 1L1 5" stroke="#444" /></svg>
                        </button>
                    </div>
                    <div className="flex h-[25px] border-y border-[#b9b9b9] bg-[#f0f0f0]">
                        <button aria-label="explorer" className="flex w-5 items-center bg-white"><Icon name="tree" className="h-4 w-4" /></button>
                        <button aria-label="web" className="flex w-6 items-center justify-center border-r border-[#dcdcdc]"><Icon name="globe" className="h-4 w-4" /></button>
                        <button aria-label="recycle bin" className="flex w-6 items-center justify-center border-r border-[#dcdcdc] bg-[#ebebeb]"><Icon name="recycler" className="h-4 w-4" /></button>
                    </div>
                    <div className="pt-0.5"><Tree /></div>
                </aside>

                <section className="min-w-0 flex-1 bg-[linear-gradient(#2f475b,#18262b_50%,#0b1115_75%,#000)]">
                    <Viewport />
                </section>

                <div className="flex w-4 shrink-0 flex-col items-center overflow-hidden border-l-2 border-white bg-[#f0f0f0] pt-0.5">
                    <Tools names={["vmach", "vtop", "vside", "vfront", "viso"]} />
                    <Tools names={["zoom", "refresh", "zfit", "zbox"]} />
                    <div className="mt-0.5 mb-px h-px w-full bg-[#c4c4c4]" />
                    <Tools names={["vblock"]} on={["vblock"]} />
                    <div className="my-0.5 h-px w-full bg-[#c4c4c4]" />
                    <Tools names={["ball", "wire"]} on={["ball"]} />
                    <div className="my-1.5 h-px w-full bg-[#c4c4c4]" />
                    <div className="flex flex-col gap-1"><Tools names={["select", "deselect"]} /></div>
                    <Close label="close view bar" />
                    <div className="h-px w-full bg-[#c4c4c4]" />
                </div>
            </main>

            <div className="flex h-[22px] border-t border-[#dcdcdc]">
                <Bar>
                    <CutTool name="cup" />
                    <Combo label="stock" className="w-3.5 bg-white" />
                    <div className="w-1" />
                    <Tools names={["limA", "limB", "limC"]} />
                    <Combo label="limit tool" text="R3" className="w-[83px] bg-[#e4e4e4]" />
                    <Tools names={["gcube"]} />
                    <div className="w-1.5" />
                    <Sep />
                    <Tools names={["pickA", "startpt"]} />
                    <div className="w-[18px]" />
                    <Sep />
                    <Tools names={["chkA", "chkB", "chkC"]} />
                    <Sep />
                    <Tools names={["marker", "cdel"]} />
                    <Close label="close tool bar" />
                </Bar>
            </div>

            <footer className="flex h-[22px] items-center border-b border-[#bdbdbd]">
                <CutTool name="vblock" />
                <Combo label="workplane" text="POST" className="w-[63px] bg-[#e8e8e8]" />
                <Tools names={["planeX", "planeY", "planeZ"]} on={["planeZ"]} />
                <div className="ml-2 flex"><Tools names={["grid"]} /></div>
                <div className="mr-1.5 ml-1 h-4 w-9 border border-[#e2e2e2]" />
                <div className="flex gap-px">
                    <Field label="x" value="-281.19" />
                    <Field label="y" value="90.3391" />
                    <Field label="z" value="-1.8739" />
                </div>
                <Tools names={["list", "scatter"]} />
                <div className="mr-2 ml-1 h-4 w-[60px] border border-[#e2e2e2]" />
                <Tools names={["units"]} />
                <div className="ml-1.5 flex items-center gap-px">
                    <Tools names={["tol"]} />
                    <Field label="units" value="毫米" />
                    <Tools names={["target"]} />
                    <Field label="tolerance" />
                    <Tools names={["tip"]} />
                    <Field label="thickness" />
                    <Tools names={["dia"]} />
                    <Field label="diameter" value="20.0" />
                    <Tools names={["rad"]} />
                    <Field label="tip radius" value="3.0" />
                </div>
            </footer>
        </div>
        <Logo />
    </div>
}
